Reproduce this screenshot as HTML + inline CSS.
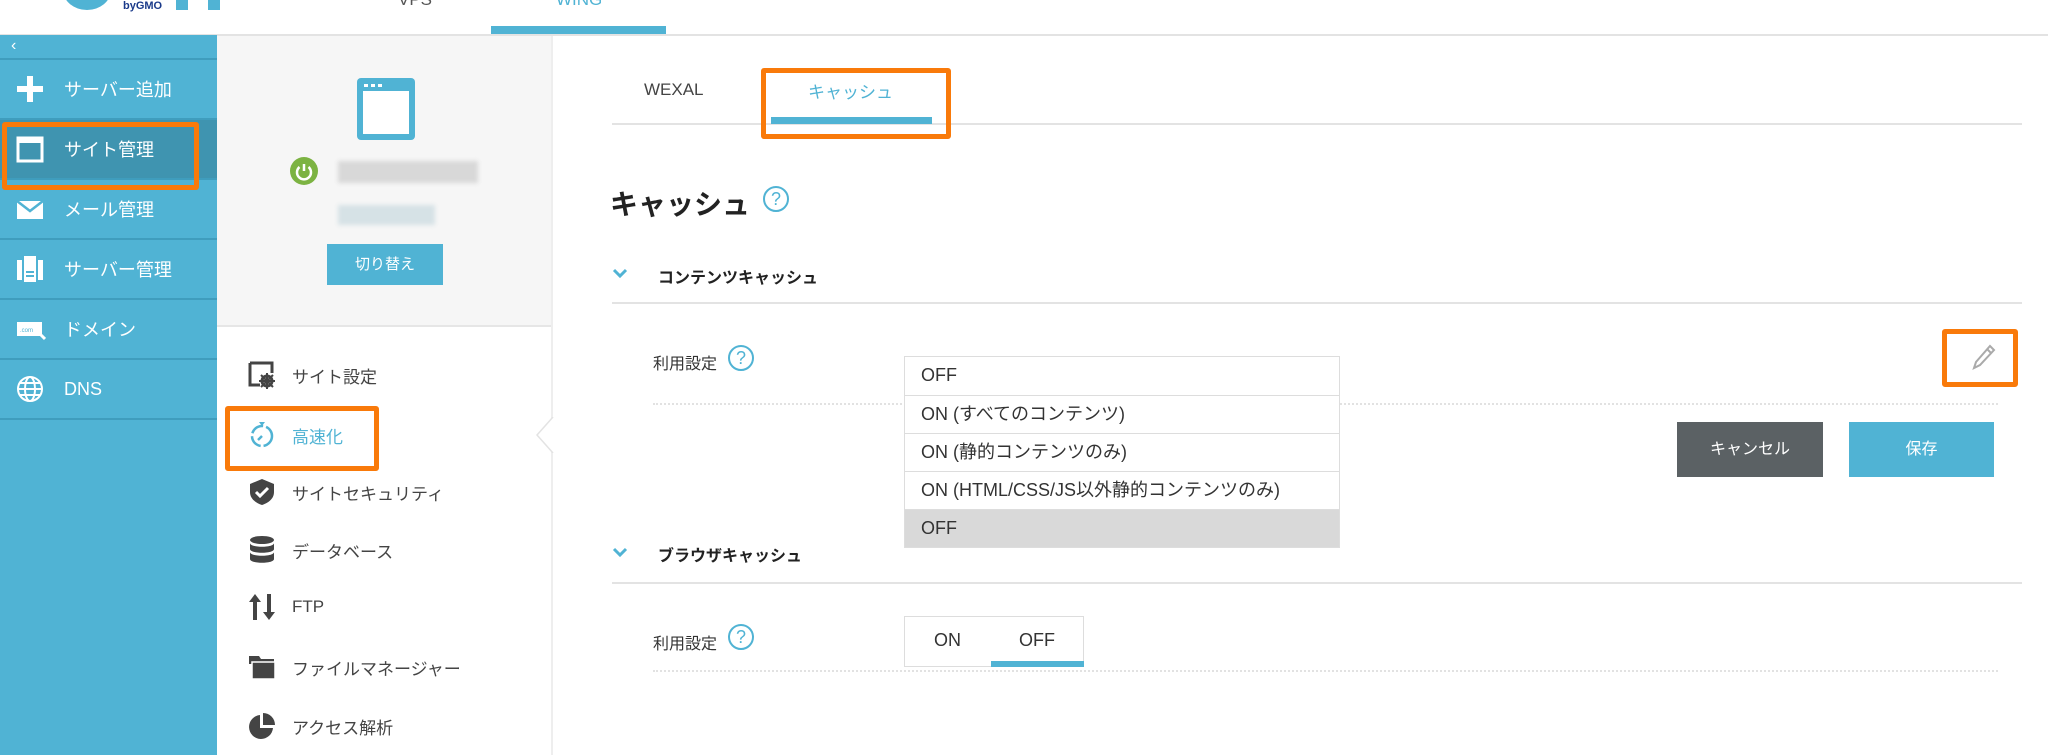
<!DOCTYPE html>
<html><head><meta charset="utf-8"><style>
*{margin:0;padding:0;box-sizing:border-box}
body{width:2048px;height:755px;overflow:hidden;background:#fff;font-family:"Liberation Sans","Noto Sans CJK JP",sans-serif;color:#333;position:relative}
.a{position:absolute}
.side{left:0;top:35px;width:217px;height:720px;background:#50b3d4}
.si{left:0;width:217px;height:60px;border-bottom:2px solid #3f9dbd;color:#fff;font-size:18px;display:flex;align-items:center;padding-left:64px}
.si svg{position:absolute;left:16px}
.mi{left:248px;font-size:17px;color:#444;display:flex;align-items:center;height:30px}
.mi .t{position:absolute;left:44px;white-space:nowrap}
.orange{border:5px solid #f97a0a;border-radius:3px}
.q{width:26px;height:26px;border:2px solid #50b3d4;border-radius:50%;color:#50b3d4;font-size:18px;text-align:center;line-height:22px}
.opt{left:904px;width:436px;height:38px;border:1px solid #ddd;border-top:none;font-size:18px;padding-left:16px;line-height:36px;color:#333;background:#fff}
.dot{height:0;border-top:2px dotted #e2e2e2}
</style></head><body>
<!-- header -->
<div class="a" style="left:0;top:34px;width:2048px;height:2px;background:#e3e3e3"></div>
<div class="a" style="left:63px;top:-30px;width:48px;height:40px;border-radius:50%;background:#50b3d4"></div>
<div class="a" style="left:123px;top:0;font-size:11px;font-weight:bold;color:#1a3a8a">byGMO</div>
<div class="a" style="left:176px;top:0;width:12px;height:10px;background:#50b3d4"></div>
<div class="a" style="left:208px;top:0;width:12px;height:10px;background:#50b3d4"></div>
<div class="a" style="left:398px;top:-10px;font-size:17px;color:#555">VPS</div>
<div class="a" style="left:556px;top:-10px;font-size:17px;color:#50b3d4">WING</div>
<div class="a" style="left:491px;top:26px;width:175px;height:8px;background:#50b3d4"></div>
<!-- sidebar -->
<div class="a side"></div>
<div class="a" style="left:0;top:36px;width:217px;height:24px;border-bottom:2px solid #3f9dbd;color:#fff;font-size:16px;padding-left:11px;line-height:20px">&#x2039;</div>
<div class="a si" style="top:60px"><svg width="28" height="28" viewBox="0 0 28 28"><path d="M11 1h6v10h10v6H17v10h-6V17H1v-6h10z" fill="#fff"/></svg>サーバー追加</div>
<div class="a si" style="top:120px;background:#3f94b0"><svg width="28" height="28" viewBox="0 0 28 28"><rect x="2" y="3" width="24" height="23" fill="none" stroke="#fff" stroke-width="3"/><rect x="2" y="3" width="24" height="5" fill="#fff"/></svg>サイト管理</div>
<div class="a si" style="top:180px"><svg width="28" height="28" viewBox="0 0 28 28"><rect x="1" y="6" width="26" height="18" fill="#fff"/><path d="M1 6l13 10 13-10" fill="none" stroke="#50b3d4" stroke-width="2.5"/></svg>メール管理</div>
<div class="a si" style="top:240px"><svg width="28" height="30" viewBox="0 0 28 30"><rect x="1" y="6" width="5" height="20" fill="#fff"/><rect x="8" y="2" width="12" height="26" fill="#fff"/><rect x="22" y="6" width="5" height="20" fill="#fff"/><path d="M10 18h8M10 22h8" stroke="#50b3d4" stroke-width="2"/></svg>サーバー管理</div>
<div class="a si" style="top:300px"><svg width="30" height="28" viewBox="0 0 30 28"><rect x="1" y="7" width="25" height="14" fill="#fff"/><text x="4" y="17" font-size="6" fill="#50b3d4" font-family="Liberation Sans">.com</text><path d="M24 19l5 5" stroke="#fff" stroke-width="3"/></svg>ドメイン</div>
<div class="a si" style="top:360px"><svg width="28" height="28" viewBox="0 0 28 28" fill="none" stroke="#fff" stroke-width="2"><circle cx="14" cy="14" r="12"/><ellipse cx="14" cy="14" rx="5" ry="12"/><path d="M2 14h24M4 8h20M4 20h20"/></svg>DNS</div>
<div class="a orange" style="left:2px;top:122px;width:197px;height:68px"></div>
<!-- second column -->
<div class="a" style="left:217px;top:36px;width:335px;height:291px;background:#f6f6f6;border-bottom:2px solid #e6e6e6"></div>
<div class="a" style="left:551px;top:36px;width:2px;height:719px;background:#eee"></div>
<svg class="a" style="left:536px;top:417px" width="18" height="36" viewBox="0 0 18 36"><path d="M17 0L1 18l16 18" fill="#fff" stroke="#e3e3e3" stroke-width="1.5"/></svg>
<svg class="a" style="left:357px;top:78px" width="58" height="62" viewBox="0 0 58 62"><rect x="0" y="0" width="58" height="62" rx="4" fill="#50b3d4"/><rect x="6" y="13" width="46" height="43" fill="#fff"/><rect x="7" y="6" width="4" height="3" fill="#fff"/><rect x="14" y="6" width="4" height="3" fill="#fff"/><rect x="21" y="6" width="4" height="3" fill="#fff"/></svg>
<svg class="a" style="left:290px;top:157px" width="28" height="28" viewBox="0 0 28 28"><circle cx="14" cy="14" r="14" fill="#7cb342"/><path d="M9.5 10a7 7 0 1 0 9 0" fill="none" stroke="#fff" stroke-width="2.5"/><path d="M14 7v7" stroke="#fff" stroke-width="2.5"/></svg>
<div class="a" style="left:338px;top:161px;width:140px;height:22px;background:#d8d8d8;filter:blur(2px)"></div>
<div class="a" style="left:338px;top:205px;width:97px;height:20px;background:#d6e2e6;filter:blur(2px)"></div>
<div class="a" style="left:327px;top:244px;width:116px;height:41px;background:#50b3d4;color:#fff;font-size:15px;text-align:center;line-height:41px">切り替え</div>
<div class="a mi" style="top:360px"><svg width="28" height="28" viewBox="0 0 28 28"><path d="M2 2h22v10" fill="none" stroke="#444" stroke-width="3"/><path d="M2 2v22h10" fill="none" stroke="#444" stroke-width="3"/><circle cx="19" cy="20" r="5" fill="none" stroke="#444" stroke-width="3"/><path d="M19 12v16M11 20h16M13 14l12 12M25 14l-12 12" stroke="#444" stroke-width="2"/></svg><span class="t">サイト設定</span></div>
<div class="a mi" style="top:420px;color:#50b3d4"><svg width="28" height="30" viewBox="0 0 28 30"><circle cx="14" cy="16" r="10" fill="none" stroke="#50b3d4" stroke-width="2.5" stroke-dasharray="14 3"/><path d="M14 16l-4 4" stroke="#50b3d4" stroke-width="2.5"/><path d="M11 2h6l-3 4z" fill="#50b3d4"/></svg><span class="t">高速化</span></div>
<div class="a orange" style="left:225px;top:406px;width:154px;height:65px"></div>
<div class="a mi" style="top:477px"><svg width="28" height="28" viewBox="0 0 28 28"><path d="M14 1l12 5v8c0 7-6 11-12 13C8 25 2 21 2 14V6z" fill="#444"/><path d="M8 14l4 4 8-8" fill="none" stroke="#fff" stroke-width="3"/></svg><span class="t">サイトセキュリティ</span></div>
<div class="a mi" style="top:535px"><svg width="28" height="30" viewBox="0 0 28 30"><ellipse cx="14" cy="5" rx="12" ry="4" fill="#444"/><path d="M2 8c0 5 24 5 24 0v6c0 5-24 5-24 0zM2 17c0 5 24 5 24 0v7c0 5-24 5-24 0z" fill="#444"/></svg><span class="t">データベース</span></div>
<div class="a mi" style="top:592px"><svg width="28" height="30" viewBox="0 0 28 30"><path d="M7 2l6 8H9v18H5V10H1z" fill="#444"/><path d="M21 28l6-8h-4V2h-4v18h-4z" fill="#444"/></svg><span class="t">FTP</span></div>
<div class="a mi" style="top:652px"><svg width="28" height="28" viewBox="0 0 28 28"><path d="M1 3h10l2 3h13v5H1z" fill="#444"/><rect x="4" y="9" width="23" height="17" fill="#444" stroke="#fff" stroke-width="1.5"/></svg><span class="t">ファイルマネージャー</span></div>
<div class="a mi" style="top:711px"><svg width="28" height="28" viewBox="0 0 28 28"><path d="M12 3a12 12 0 1 0 13 13H12z" fill="#444"/><path d="M15 1a12 12 0 0 1 12 12H15z" fill="#444"/></svg><span class="t">アクセス解析</span></div>
<!-- main -->
<div class="a" style="left:644px;top:80px;font-size:17px;color:#444">WEXAL</div>
<div class="a" style="left:808px;top:78px;font-size:17px;color:#50b3d4">キャッシュ</div>
<div class="a" style="left:612px;top:123px;width:1410px;height:2px;background:#e3e3e3"></div>
<div class="a" style="left:771px;top:117px;width:161px;height:7px;background:#50b3d4"></div>
<div class="a orange" style="left:761px;top:68px;width:190px;height:71px"></div>
<div class="a" style="left:610px;top:183px;font-size:28px;font-weight:bold;color:#222">キャッシュ</div>
<div class="a q" style="left:763px;top:186px">?</div>
<svg class="a" style="left:612px;top:268px" width="16" height="12" viewBox="0 0 16 12"><path d="M2 2l6 6 6-6" fill="none" stroke="#50b3d4" stroke-width="3"/></svg>
<div class="a" style="left:658px;top:264px;font-size:16px;font-weight:bold;color:#222">コンテンツキャッシュ</div>
<div class="a" style="left:612px;top:302px;width:1410px;height:2px;background:#e3e3e3"></div>
<div class="a" style="left:653px;top:350px;font-size:16px;color:#333">利用設定</div>
<div class="a q" style="left:728px;top:345px">?</div>
<div class="a dot" style="left:653px;top:403px;width:1345px"></div>
<div class="a opt" style="top:356px;height:40px;border-top:1px solid #ddd">OFF</div>
<div class="a opt" style="top:396px">ON (すべてのコンテンツ)</div>
<div class="a opt" style="top:434px">ON (静的コンテンツのみ)</div>
<div class="a opt" style="top:472px">ON (HTML/CSS/JS以外静的コンテンツのみ)</div>
<div class="a opt" style="top:510px;background:#d9d9d9">OFF</div>
<svg class="a" style="left:1972px;top:344px" width="24" height="26" viewBox="0 0 24 26"><path d="M18 2l4 4L8 21l-6 3 2-6z" fill="none" stroke="#aaa" stroke-width="2"/><path d="M15 5l4 4" stroke="#aaa" stroke-width="2"/></svg>
<div class="a orange" style="left:1942px;top:329px;width:76px;height:58px"></div>
<div class="a" style="left:1677px;top:422px;width:146px;height:55px;background:#5b6164;color:#fff;font-size:16px;text-align:center;line-height:55px">キャンセル</div>
<div class="a" style="left:1849px;top:422px;width:145px;height:55px;background:#50b3d4;color:#fff;font-size:16px;text-align:center;line-height:55px">保存</div>
<svg class="a" style="left:612px;top:547px" width="16" height="12" viewBox="0 0 16 12"><path d="M2 2l6 6 6-6" fill="none" stroke="#50b3d4" stroke-width="3"/></svg>
<div class="a" style="left:658px;top:542px;font-size:16px;font-weight:bold;color:#222">ブラウザキャッシュ</div>
<div class="a" style="left:612px;top:582px;width:1410px;height:2px;background:#e3e3e3"></div>
<div class="a" style="left:653px;top:630px;font-size:16px;color:#333">利用設定</div>
<div class="a q" style="left:728px;top:624px">?</div>
<div class="a" style="left:904px;top:616px;width:180px;height:51px;border:1px solid #ddd"></div>
<div class="a" style="left:934px;top:630px;font-size:18px;color:#333">ON</div>
<div class="a" style="left:1019px;top:630px;font-size:18px;color:#333">OFF</div>
<div class="a" style="left:991px;top:661px;width:93px;height:6px;background:#50b3d4"></div>
<div class="a dot" style="left:653px;top:670px;width:1345px"></div>
</body></html>
